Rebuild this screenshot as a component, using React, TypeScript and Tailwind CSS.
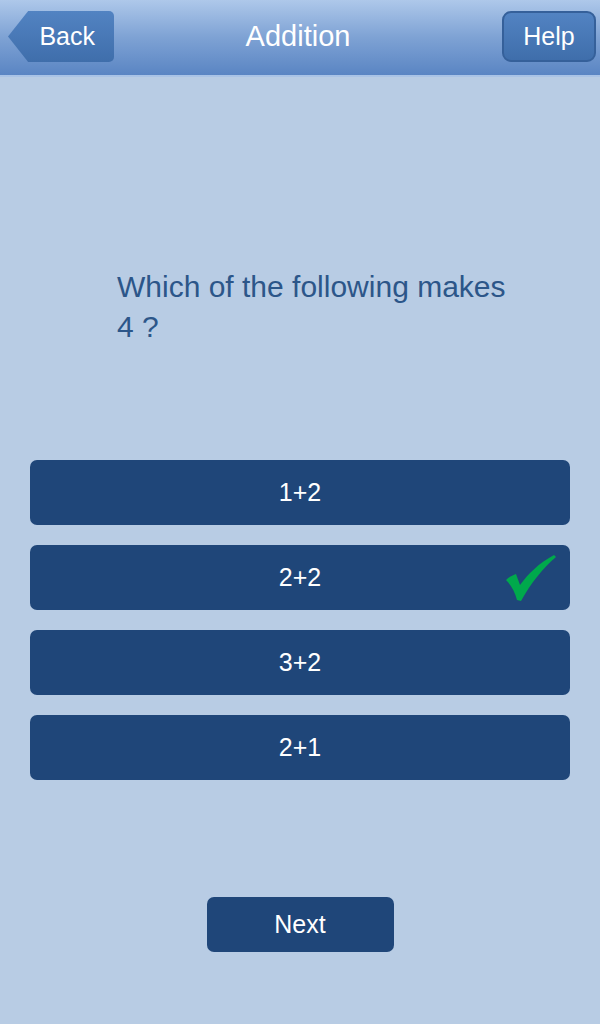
import { useState } from "react";

const answers = ["1+2", "2+2", "3+2", "2+1"];

function CheckMark() {
  return (
    <svg width="50" height="46" viewBox="0 0 50 46" className="absolute right-[14px] top-[10px]">
      <path
        d="M0 25 C3 22 7 20 10 19 L14 30 C22 19 33 8 48 0 L50 2 C37 13 25 28 15 46 L11 45 C9 37 5 30 0 25 Z"
        fill="#00a94c"
      />
    </svg>
  );
}

export default function App() {
  const [picked, setPicked] = useState(1);

  return (
    <div
      className="min-h-[1024px] w-[600px] bg-[#b8cce4]"
      style={{ fontFamily: '"Liberation Sans", Arial, sans-serif' }}
    >
      <header className="grid h-[77px] grid-cols-[1fr_auto_1fr] items-center border-b-2 border-[#a9c3e6] bg-gradient-to-b from-[#aec8ea] via-[#7ea2d4] to-[#5a85c3] px-[4px] pb-[2px]">
        <button
          type="button"
          className="ml-[4px] flex h-[51px] w-[106px] items-center justify-end rounded-r-[5px] bg-gradient-to-b from-[#5283c2] to-[#3f6eab] pr-[19px] text-[25px] text-white [clip-path:polygon(19%_0,100%_0,100%_100%,19%_100%,0_50%)]"
        >
          Back
        </button>
        <h1 className="mr-[4px] text-[29px] text-white">Addition</h1>
        <button
          type="button"
          className="flex h-[51px] w-[94px] items-center justify-center justify-self-end rounded-[9px] border-2 border-[#35609a] bg-gradient-to-b from-[#5283c2] to-[#3f6eab] text-[25px] text-white"
        >
          Help
        </button>
      </header>

      <p className="mt-[190px] box-content w-[400px] pl-[117px] text-[30px] leading-[40px] text-[#2c5689]">
        Which of the following makes 4 ?
      </p>

      <div className="mt-[113px] flex flex-col gap-[20px] px-[30px]">
        {answers.map((a, i) => (
          <button
            key={a}
            type="button"
            onClick={() => setPicked(i)}
            className="relative flex h-[65px] items-center justify-center rounded-[7px] bg-[#1f4679] text-[25px] text-white"
          >
            {a}
            {picked === i && <CheckMark />}
          </button>
        ))}
      </div>

      <div className="mt-[117px] flex justify-center">
        <button
          type="button"
          className="h-[55px] w-[187px] rounded-[7px] bg-[#1f4679] text-[25px] text-white"
        >
          Next
        </button>
      </div>
    </div>
  );
}
